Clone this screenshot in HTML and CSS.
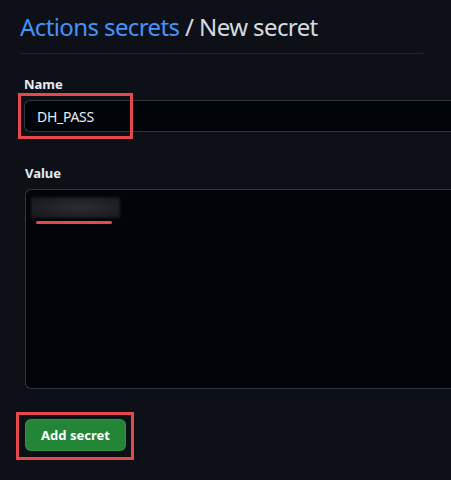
FILE: index.html
```html
<!DOCTYPE html>
<html lang="en">
<head>
<meta charset="utf-8">
<title>New secret</title>
<link rel="stylesheet" href="styles.css">
</head>
<body>
<div class="page">
  <header class="subhead">
    <h1 class="subhead-title"><a class="crumb" href="#">Actions secrets</a> / New secret</h1>
  </header>
  <form class="secret-form">
    <label class="field-label" for="name">Name</label>
    <div class="field">
      <div class="text-input">DH_PASS</div>
      <span class="highlight highlight-name"></span>
    </div>
    <label class="field-label label-value" for="value">Value</label>
    <div class="textarea">
      <span class="blurred"></span>
      <span class="underline"></span>
    </div>
    <div class="actions">
      <button class="btn-primary" type="button">Add secret</button>
      <span class="highlight highlight-btn"></span>
    </div>
  </form>
</div>
</body>
</html>
```

FILE: styles.css
```css
html, body {
  margin: 0;
  padding: 0;
  background: #0d1117;
  overflow: hidden;
  height: 100%;
}
body {
  font-family: "Noto Sans", "Open Sans", "Liberation Sans", sans-serif;
  color: #e6edf3;
}
.page {
  padding-left: 20px;
}
.subhead {
  width: 403px;
  padding-top: 9px;
  padding-bottom: 8px;
  border-bottom: 1px solid #21262d;
}
.subhead-title {
  margin: 0;
  font-size: 24px;
  font-weight: 400;
  line-height: 36px;
  letter-spacing: -0.6px;
  color: #d5dbe1;
  white-space: nowrap;
}
.crumb {
  color: #4493f8;
  text-decoration: none;
}
.secret-form {
  display: flex;
  flex-direction: column;
  align-items: flex-start;
  padding-top: 20px;
  padding-left: 4px;
}
.field-label {
  display: block;
  font-size: 13px;
  font-weight: 700;
  line-height: 20px;
  color: #e6edf3;
  margin-bottom: 6px;
}
.label-value {
  margin-top: 31px;
  margin-left: 1px;
}
.field {
  position: relative;
}
.text-input {
  box-sizing: border-box;
  width: 427px;
  height: 32px;
  padding: 0 12px;
  display: flex;
  align-items: center;
  font-size: 14px;
  letter-spacing: -0.3px;
  color: #e6edf3;
  background: #010409;
  border: 1px solid #30363d;
  border-right: none;
  border-radius: 6px 0 0 6px;
}
.textarea {
  position: relative;
  box-sizing: border-box;
  width: 426px;
  height: 200px;
  margin-left: 1px;
  background: #010409;
  border: 1px solid #30363d;
  border-right: none;
  border-radius: 6px 0 0 6px;
}
.blurred {
  position: absolute;
  left: 5px;
  top: 7px;
  width: 89px;
  height: 21px;
  background: radial-gradient(ellipse at 55% 50%, #2c2e32 0%, #1e2024 55%, #15171b 100%);
  filter: blur(1px);
}
.underline {
  position: absolute;
  left: 10px;
  top: 31px;
  width: 76px;
  height: 3px;
  border-radius: 2px;
  background: #e5484d;
}
.actions {
  position: relative;
  margin-top: 30px;
  margin-left: 1px;
}
.btn-primary {
  box-sizing: border-box;
  width: 101px;
  height: 32px;
  padding: 0;
  font-family: inherit;
  font-size: 13px;
  font-weight: 700;
  color: #ffffff;
  background: #238636;
  border: 1px solid rgba(240, 246, 252, 0.1);
  border-radius: 6px;
}
.highlight {
  position: absolute;
  box-sizing: border-box;
  border: 3px solid #e5484d;
  pointer-events: none;
}
.highlight-name {
  left: -6px;
  top: -7px;
  width: 115px;
  height: 46px;
}
.highlight-btn {
  left: -9px;
  top: -7px;
  width: 118px;
  height: 48px;
}
```
